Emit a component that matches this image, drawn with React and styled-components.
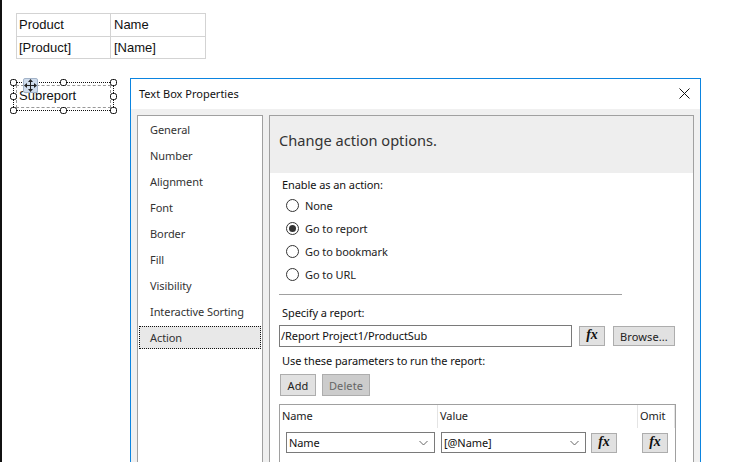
import React from "react";
import styled, { createGlobalStyle } from "styled-components";

const Global = createGlobalStyle`
  html, body { margin: 0; padding: 0; background: #fff; }
  * { box-sizing: border-box; }
`;

const Page = styled.div`
  width: 740px;
  height: 462px;
  overflow: hidden;
  background: #fff;
  border-left: 2px solid #111;
  padding: 13px 0 0 14px;
  font-family: "Noto Sans", sans-serif;
  font-size: 11px;
  letter-spacing: -0.08px;
  color: #222;
`;

const ReportTable = styled.div`
  display: grid;
  grid-template-columns: 94px 95px;
  grid-template-rows: 23px 22px;
  width: 190px;
  border: 1px solid #d3d3d3;
  border-width: 1px 1px 0 1px;
  font-family: "Liberation Sans", sans-serif;
  font-size: 13px;
  letter-spacing: 0;
  color: #111;
`;

const ReportCell = styled.div`
  display: flex;
  align-items: center;
  padding-left: ${p => (p.$last ? 3 : 2)}px;
  padding-bottom: ${p => (p.$head ? 2 : 0)}px;
  border-bottom: 1px solid #d3d3d3;
  border-right: ${p => (p.$last ? "none" : "1px solid #d3d3d3")};
`;

const Stage = styled.div`
  display: flex;
  align-items: flex-start;
  margin-top: 19px;
`;

const Subreport = styled.div`
  position: relative;
  flex: none;
  width: 95px;
  height: 23px;
  margin-top: 7px;
  border: 1px dashed #999;
  padding-left: 2px;
  font-family: "Liberation Sans", sans-serif;
  font-size: 13px;
  letter-spacing: 0;
  line-height: 19px;
  color: #111;
`;

const SelectionFrame = styled.div`
  position: absolute;
  left: -4px;
  top: -4px;
  width: 101px;
  height: 29px;
  border: 1px dotted #111;
`;

const Handle = styled.span`
  position: absolute;
  width: 7px;
  height: 7px;
  left: ${p => p.$x}px;
  top: ${p => p.$y}px;
  border: 1px solid #111;
  border-radius: 2.5px;
  background: #fff;
`;

const MoveBox = styled.div`
  position: absolute;
  left: 6px;
  top: -8px;
  width: 15px;
  height: 15px;
  background: #cfdcec;
  border: 1px solid #a3b3c8;
  border-radius: 2px;
  display: flex;
  align-items: center;
  justify-content: center;
`;

const Dialog = styled.div`
  flex: none;
  width: 571px;
  height: 400px;
  margin-left: 19px;
  border: 1px solid #0b84e0;
  background: #f0f0f0;
  display: flex;
  flex-direction: column;
`;

const TitleBar = styled.div`
  flex: none;
  height: 30px;
  background: #fff;
  display: flex;
  align-items: center;
  justify-content: space-between;
  padding: 0 10px 2px 8px;
  color: #111;
  font-size: 11px;
  letter-spacing: 0;
`;

const DialogBody = styled.div`
  display: flex;
  gap: 6px;
  padding: 6px 6px 0 6px;
  flex: 1;
`;

const Nav = styled.div`
  flex: none;
  width: 126px;
  background: #fff;
  border: 1px solid #a0a0a0;
  padding: 2px 1px 1px;
  display: flex;
  flex-direction: column;
  gap: 3px;
`;

const NavItem = styled.div`
  height: 23px;
  display: flex;
  align-items: center;
  padding-left: 10px;
  color: #333;
  background: ${p => (p.$active ? "#e8e8e8" : "transparent")};
  border: 1px ${p => (p.$active ? "dotted #111" : "solid transparent")};
`;

const Panel = styled.div`
  flex: none;
  width: 425px;
  background: #fff;
  border: 1px solid #a0a0a0;
  display: flex;
  flex-direction: column;
`;

const PanelHeader = styled.div`
  flex: none;
  height: 57px;
  background: #eee;
  padding: 14px 0 0 9px;
  font-size: 14.6px;
  letter-spacing: 0;
  line-height: 21px;
  color: #333;
`;

const PanelContent = styled.div`
  padding: 3px 17px 0 9px;
`;

const FieldLabel = styled.div`
  height: 18px;
  line-height: 18px;
  padding-left: 3px;
  color: #111;
`;

const RadioGroup = styled.div`
  display: flex;
  flex-direction: column;
  gap: 9px;
  margin-top: 4px;
  padding-left: 7px;
`;

const RadioRow = styled.div`
  height: 14px;
  display: flex;
  align-items: center;
  gap: 6px;
  color: #222;
`;

const RadioCircle = styled.span`
  flex: none;
  width: 13px;
  height: 13px;
  border-radius: 50%;
  border: 1px solid #333;
  background: #fff;
  display: flex;
  align-items: center;
  justify-content: center;
  &::after {
    content: "";
    display: ${p => (p.$on ? "block" : "none")};
    width: 7px;
    height: 7px;
    border-radius: 50%;
    background: #333;
  }
`;

const Divider = styled.div`
  width: 343px;
  height: 1px;
  background: #a0a0a0;
  margin-top: 13px;
`;

const ReportLabel = styled(FieldLabel)`
  margin-top: 9px;
`;

const ReportRow = styled.div`
  display: flex;
  align-items: center;
  margin-top: 3px;
`;

const TextInput = styled.div`
  width: 293px;
  height: 22px;
  border: 1px solid #7a7a7a;
  padding-left: 1px;
  line-height: 19px;
  color: #111;
`;

const FxButton = styled.button`
  flex: none;
  width: 26px;
  height: 20px;
  margin-left: ${p => p.$gap || 0}px;
  padding: 0 0 2px;
  background: #e1e1e1;
  border: 1px solid #adadad;
  font-family: "Liberation Serif", serif;
  font-style: italic;
  font-weight: bold;
  font-size: 14px;
  line-height: 14px;
  color: #111;
`;

const Button = styled.button`
  flex: none;
  width: ${p => p.$w}px;
  height: ${p => p.$h || 22}px;
  margin-left: ${p => p.$gap || 0}px;
  padding: 0;
  background: ${p => (p.$disabled ? "#ccc" : "#e1e1e1")};
  border: 1px solid #adadad;
  font-family: inherit;
  font-size: 11px;
  letter-spacing: 0.1px;
  color: ${p => (p.$disabled ? "#666" : "#222")};
`;

const ParamsLabel = styled(FieldLabel)`
  margin-top: 5px;
`;

const ButtonRow = styled.div`
  display: flex;
  margin: 4px 0 0 1px;
`;

const ParamTable = styled.div`
  width: 397px;
  height: 80px;
  margin-top: 8px;
  border: 1px solid #a0a0a0;
  border-bottom: none;
`;

const ParamHead = styled.div`
  display: grid;
  grid-template-columns: 158px 200px 37px;
  height: 23px;
`;

const HeadCell = styled.div`
  padding-left: 2px;
  line-height: 21px;
  color: #222;
  border-right: 1px solid #e4e4e4;
`;

const ParamRow = styled.div`
  display: flex;
  align-items: center;
  margin-top: 4px;
  padding-left: 6px;
`;

const Select = styled.div`
  flex: none;
  width: ${p => p.$w}px;
  height: 21px;
  margin-left: ${p => p.$gap || 0}px;
  border: 1px solid #7a7a7a;
  background: #fff;
  padding: 0 6px 0 2px;
  display: flex;
  align-items: center;
  justify-content: space-between;
  color: #111;
`;

const Chevron = () => (
  <svg width="9" height="6" viewBox="0 0 9 6">
    <path d="M.5 1 4.5 5 8.5 1" fill="none" stroke="#666" strokeWidth="1" />
  </svg>
);

const MoveIcon = () => (
  <svg width="13" height="13" viewBox="0 0 13 13" fill="#222">
    <path d="M6 2h1v9H6zM2 6h9v1H2z" />
    <path d="M6.5 0 9 3H4zM6.5 13 4 10h5zM0 6.5 3 4v5zM13 6.5 10 9V4z" />
  </svg>
);

const CloseIcon = () => (
  <svg width="11" height="11" viewBox="0 0 11 11">
    <path d="M.5.5l10 10M10.5.5l-10 10" stroke="#111" strokeWidth="1" fill="none" />
  </svg>
);

const navItems = ["General", "Number", "Alignment", "Font", "Border", "Fill", "Visibility", "Interactive Sorting", "Action"];
const radios = ["None", "Go to report", "Go to bookmark", "Go to URL"];
const handles = [[-7, -7], [43, -7], [93, -7], [-7, 7], [93, 7], [-7, 21], [43, 21], [93, 21]];

export default function App() {
  return (
    <Page>
      <Global />
      <ReportTable>
        <ReportCell $head>Product</ReportCell>
        <ReportCell $head $last>Name</ReportCell>
        <ReportCell>[Product]</ReportCell>
        <ReportCell $last>[Name]</ReportCell>
      </ReportTable>
      <Stage>
        <Subreport>
          Subreport
          <SelectionFrame />
          {handles.map(([x, y]) => <Handle key={`${x}-${y}`} $x={x} $y={y} />)}
          <MoveBox><MoveIcon /></MoveBox>
        </Subreport>
        <Dialog>
          <TitleBar>
            Text Box Properties
            <CloseIcon />
          </TitleBar>
          <DialogBody>
            <Nav>
              {navItems.map(n => <NavItem key={n} $active={n === "Action"}>{n}</NavItem>)}
            </Nav>
            <Panel>
              <PanelHeader>Change action options.</PanelHeader>
              <PanelContent>
                <FieldLabel>Enable as an action:</FieldLabel>
                <RadioGroup>
                  {radios.map(r => (
                    <RadioRow key={r}><RadioCircle $on={r === "Go to report"} />{r}</RadioRow>
                  ))}
                </RadioGroup>
                <Divider />
                <ReportLabel>Specify a report:</ReportLabel>
                <ReportRow>
                  <TextInput>/Report Project1/ProductSub</TextInput>
                  <FxButton $gap={7}>fx</FxButton>
                  <Button $w={62} $h={20} $gap={8}>Browse...</Button>
                </ReportRow>
                <ParamsLabel>Use these parameters to run the report:</ParamsLabel>
                <ButtonRow>
                  <Button $w={36}>Add</Button>
                  <Button $w={48} $gap={6} $disabled>Delete</Button>
                </ButtonRow>
                <ParamTable>
                  <ParamHead>
                    <HeadCell>Name</HeadCell>
                    <HeadCell>Value</HeadCell>
                    <HeadCell>Omit</HeadCell>
                  </ParamHead>
                  <ParamRow>
                    <Select $w={149}>Name<Chevron /></Select>
                    <Select $w={145} $gap={6}>[@Name]<Chevron /></Select>
                    <FxButton $gap={5}>fx</FxButton>
                    <FxButton $gap={25}>fx</FxButton>
                  </ParamRow>
                </ParamTable>
              </PanelContent>
            </Panel>
          </DialogBody>
        </Dialog>
      </Stage>
    </Page>
  );
}
